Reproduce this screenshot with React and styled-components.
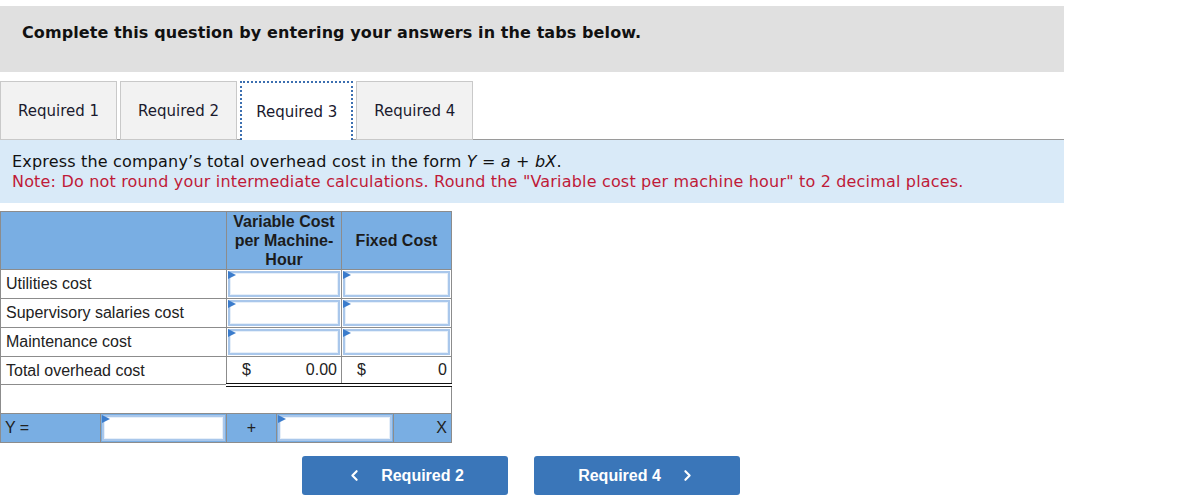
import styled, { createGlobalStyle } from "styled-components";
import { ChevronLeft, ChevronRight } from "lucide-react";

const GlobalStyle = createGlobalStyle`
    body {
        margin: 0;
        background: #fff;
        font-family: 'DejaVu Sans', Verdana, sans-serif;
    }
`;

const tabs = ['Required 1', 'Required 2', 'Required 3', 'Required 4']

const rows = ['Utilities cost', 'Supervisory salaries cost', 'Maintenance cost']

const App = () => {
    return (
        <Page>
            <GlobalStyle />
            <Banner>Complete this question by entering your answers in the tabs below.</Banner>

            <TabBar>
                {tabs.map((tab) => (
                    <Tab key={tab} $active={tab === 'Required 3'}>{tab}</Tab>
                ))}
            </TabBar>

            <Instructions>
                <p>Express the company’s total overhead cost in the form <i>Y</i> = <i>a</i> + <i>bX</i>.</p>
                <Note>Note: Do not round your intermediate calculations. Round the "Variable cost per machine hour" to 2 decimal places.</Note>
            </Instructions>

            <CostTable>
                <colgroup>
                    <col style={{ width: 100 }} />
                    <col style={{ width: 126 }} />
                    <col style={{ width: 50 }} />
                    <col style={{ width: 65 }} />
                    <col style={{ width: 52 }} />
                    <col style={{ width: 58 }} />
                </colgroup>
                <tbody>
                    <HeadRow>
                        <th colSpan={2}></th>
                        <th colSpan={2}>Variable Cost per Machine-Hour</th>
                        <th colSpan={2}>Fixed Cost</th>
                    </HeadRow>
                    {rows.map((label) => (
                        <BodyRow key={label}>
                            <Label colSpan={2}>{label}</Label>
                            <InputCell colSpan={2}><Field /></InputCell>
                            <InputCell colSpan={2}><Field /></InputCell>
                        </BodyRow>
                    ))}
                    <BodyRow>
                        <Label colSpan={2}>Total overhead cost</Label>
                        <TotalCell colSpan={2}><span>$</span><span>0.00</span></TotalCell>
                        <TotalCell colSpan={2}><span>$</span><span>0</span></TotalCell>
                    </BodyRow>
                    <SpacerRow>
                        <td colSpan={6}></td>
                    </SpacerRow>
                    <FormulaRow>
                        <td>Y =</td>
                        <InputCell><Field /></InputCell>
                        <td className="center">+</td>
                        <InputCell colSpan={2}><Field /></InputCell>
                        <td className="right">X</td>
                    </FormulaRow>
                </tbody>
            </CostTable>

            <Footer>
                <NavButton>
                    <ChevronLeft size={17} strokeWidth={3} />
                    <span>Required 2</span>
                </NavButton>
                <NavButton>
                    <span>Required 4</span>
                    <ChevronRight size={17} strokeWidth={3} />
                </NavButton>
            </Footer>
        </Page>
    )
}

export default App

const Page = styled.div`
    width: 1064px;
    padding-top: 6px;
`;

const Banner = styled.div`
    height: 66px;
    box-sizing: border-box;
    padding: 17px 22px 0;
    background-color: #e0e0e0;
    color: #111;
    font-size: 16px;
    font-weight: bold;
    line-height: 20px;
    letter-spacing: 0.09px;
`;

const TabBar = styled.div`
    display: flex;
    gap: 3px;
    margin-top: 9px;
    border-bottom: 2px solid #9a9a9a;
`;

const Tab = styled.button`
    height: 59px;
    margin-bottom: -1px;
    padding: ${(p) => (p.$active ? '0 14px' : '0 17px')};
    background-color: ${(p) => (p.$active ? '#fff' : '#f2f2f2')};
    border: ${(p) => (p.$active ? '2px dotted #3c6fb0' : '1px solid #c9c9c9')};
    border-bottom: ${(p) => (p.$active ? 'none' : '1px solid #c9c9c9')};
    font-family: 'DejaVu Sans', Verdana, sans-serif;
    font-size: 15px;
    color: #1a1a2e;
    cursor: pointer;
`;

const Instructions = styled.div`
    padding: 12px 12px 11px;
    margin-top: -1px;
    background-color: #d9eaf8;
    font-size: 16px;
    line-height: 20px;
    letter-spacing: 0.18px;
    color: #111;

    p {
        margin: 0;
    }
`;

const Note = styled.p`
    color: #bf1a38;
`;

const CostTable = styled.table`
    margin-top: 8px;
    width: 451px;
    table-layout: fixed;
    border-collapse: collapse;
    font-family: 'Liberation Sans', Arial, sans-serif;
    font-size: 16px;
    color: #222;

    td, th {
        padding: 0;
        border: 1px solid #8c8c8c;
    }
`;

const HeadRow = styled.tr`
    height: 58px;
    background-color: #79aee3;

    th {
        font-weight: bold;
        line-height: 19px;
        color: #1c1c1c;
        padding: 0 4px;
    }
`;

const BodyRow = styled.tr`
    height: 28px;
`;

const Label = styled.td`
    padding-left: 5px !important;
`;

const InputCell = styled.td`
    padding: 1px !important;
`;

const Field = styled.div`
    position: relative;
    height: 22px;
    background: #fff;
    border: 2px solid #a9c7eb;
    box-shadow: inset 0 0 0 1px #e6eff9;

    &::before {
        content: '';
        position: absolute;
        top: -2px;
        left: -2px;
        border-top: 4px solid transparent;
        border-bottom: 4px solid transparent;
        border-left: 8px solid #3b7ccc;
    }
`;

const TotalCell = styled.td`
    border-bottom: 4px double #111 !important;

    span:first-child {
        float: left;
        padding-left: 15px;
    }

    span:last-child {
        float: right;
        padding-right: 4px;
    }
`;

const SpacerRow = styled.tr`
    height: 29px;

    td {
        border-top: none;
    }
`;

const FormulaRow = styled.tr`
    height: 29px;
    background-color: #79aee3;

    td {
        padding-left: 4px;
    }

    .center {
        text-align: center;
        padding-left: 0;
    }

    .right {
        text-align: right;
        padding-right: 4px;
    }
`;

const Footer = styled.div`
    display: flex;
    gap: 26px;
    margin: 13px 0 0 302px;
`;

const NavButton = styled.button`
    display: flex;
    align-items: center;
    justify-content: center;
    gap: 18px;
    width: 206px;
    height: 39px;
    background-color: #3a76b9;
    border: none;
    border-radius: 3px;
    color: #fff;
    font-family: 'Liberation Sans', Arial, sans-serif;
    font-size: 16px;
    font-weight: bold;
    cursor: pointer;
`;
